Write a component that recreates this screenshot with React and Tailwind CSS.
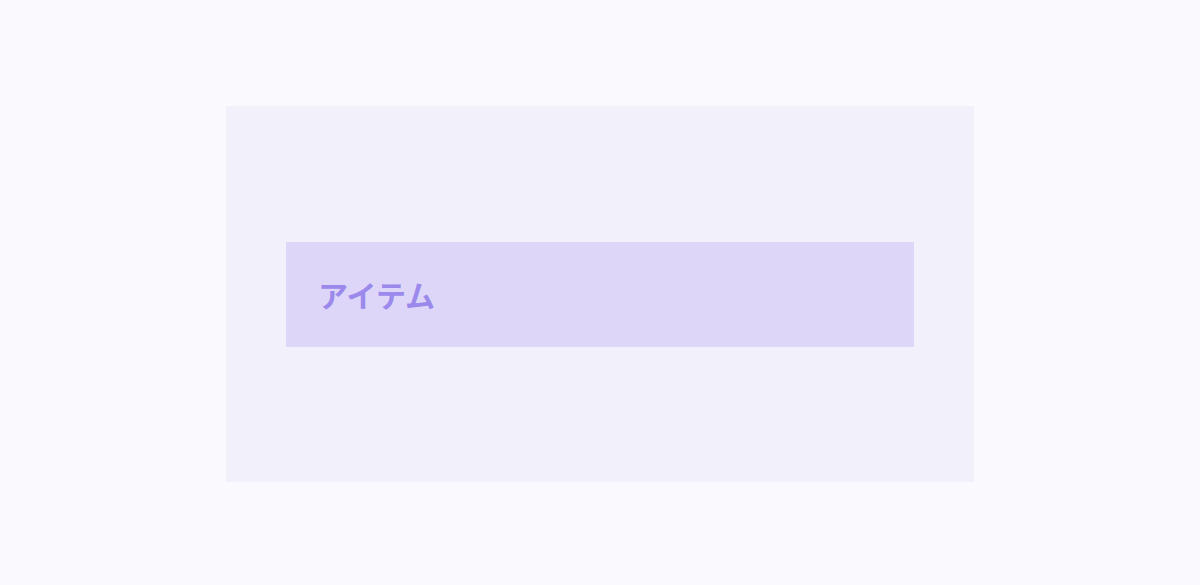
import React from 'react';

export default function App() {
  return (
    <div className="flex h-[585px] w-[1200px] items-start justify-center bg-[#f9f9fe] pt-[106px]">
      <div className="flex h-[376px] w-[748px] flex-col justify-center bg-[#f1f0fb] px-[60px]">
        <div className="flex h-[105px] items-center bg-[#ddd6f8] px-[32px]">
          <span
            className="text-[30px] font-bold leading-none text-[#9b8aec]"
            style={{ fontFamily: '"Noto Sans CJK JP", "Noto Sans", sans-serif' }}
          >
            アイテム
          </span>
        </div>
      </div>
    </div>
  );
}
